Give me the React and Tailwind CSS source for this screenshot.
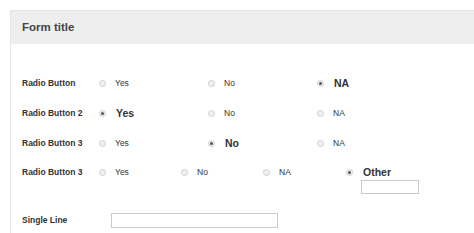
import React from 'react';

// One radio option: circle + caption. The selected one is shown larger.
const Radio = ({ label, checked, width }) => (
  <div className="flex items-center h-[16px] shrink-0" style={{ width }}>
    <span className="w-[7px] h-[7px] rounded-full border border-[#d0d0d0] bg-[#f0f0f0] flex items-center justify-center shrink-0">
      {checked && <span className="w-[3px] h-[3px] rounded-full bg-[#555]"></span>}
    </span>
    <span
      className={
        checked
          ? 'ml-[10px] text-[10.5px] font-bold text-[#333] leading-none'
          : 'ml-[9px] text-[8.5px] text-[#333] leading-none'
      }
    >
      {label}
    </span>
  </div>
);

const Row = ({ label, options, selected, colWidth, className = '' }) => (
  <div className={`flex items-start ${className}`}>
    <div className="w-[77px] h-[16px] flex items-center text-[8.5px] font-bold text-[#333] shrink-0">
      {label}
    </div>
    {options.map((o) => (
      <Radio key={o} label={o} checked={o === selected} width={colWidth} />
    ))}
  </div>
);

export default function App() {
  return (
    <div className="w-[474px] h-[233px] bg-white overflow-hidden pt-[10px] pl-[10px] font-['Liberation_Sans',Arial,sans-serif]">
      <div className="border-l border-t border-[#e6e6e6] h-full">
        <div className="h-[33px] bg-[#eeeeee] flex items-center pl-[11px] text-[11.5px] font-bold text-[#444]">
          Form title
        </div>

        <div className="pl-[11px] pt-[31px]">
          <Row label="Radio Button" options={['Yes', 'No', 'NA']} selected="NA" colWidth={109} />
          <Row label="Radio Button 2" options={['Yes', 'No', 'NA']} selected="Yes" colWidth={109} className="mt-[14px]" />
          <Row label="Radio Button 3" options={['Yes', 'No', 'NA']} selected="No" colWidth={109} className="mt-[14px]" />

          <div className="flex items-start mt-[13px]">
            <div className="w-[77px] h-[16px] flex items-center text-[8.5px] font-bold text-[#333] shrink-0">
              Radio Button 3
            </div>
            <Radio label="Yes" width={82} />
            <Radio label="No" width={82} />
            <Radio label="NA" width={83} />
            <div className="flex flex-col">
              <Radio label="Other" checked width={80} />
              <input className="ml-[15px] w-[58px] h-[14px] border border-[#cccccc] bg-white outline-none" />
            </div>
          </div>

          <div className="flex items-center mt-[19px] h-[15px]">
            <div className="w-[89px] text-[8.5px] font-bold text-[#333] shrink-0">Single Line</div>
            <input className="w-[167px] h-[15px] border border-[#cccccc] bg-white outline-none" />
          </div>
        </div>
      </div>
    </div>
  );
}
